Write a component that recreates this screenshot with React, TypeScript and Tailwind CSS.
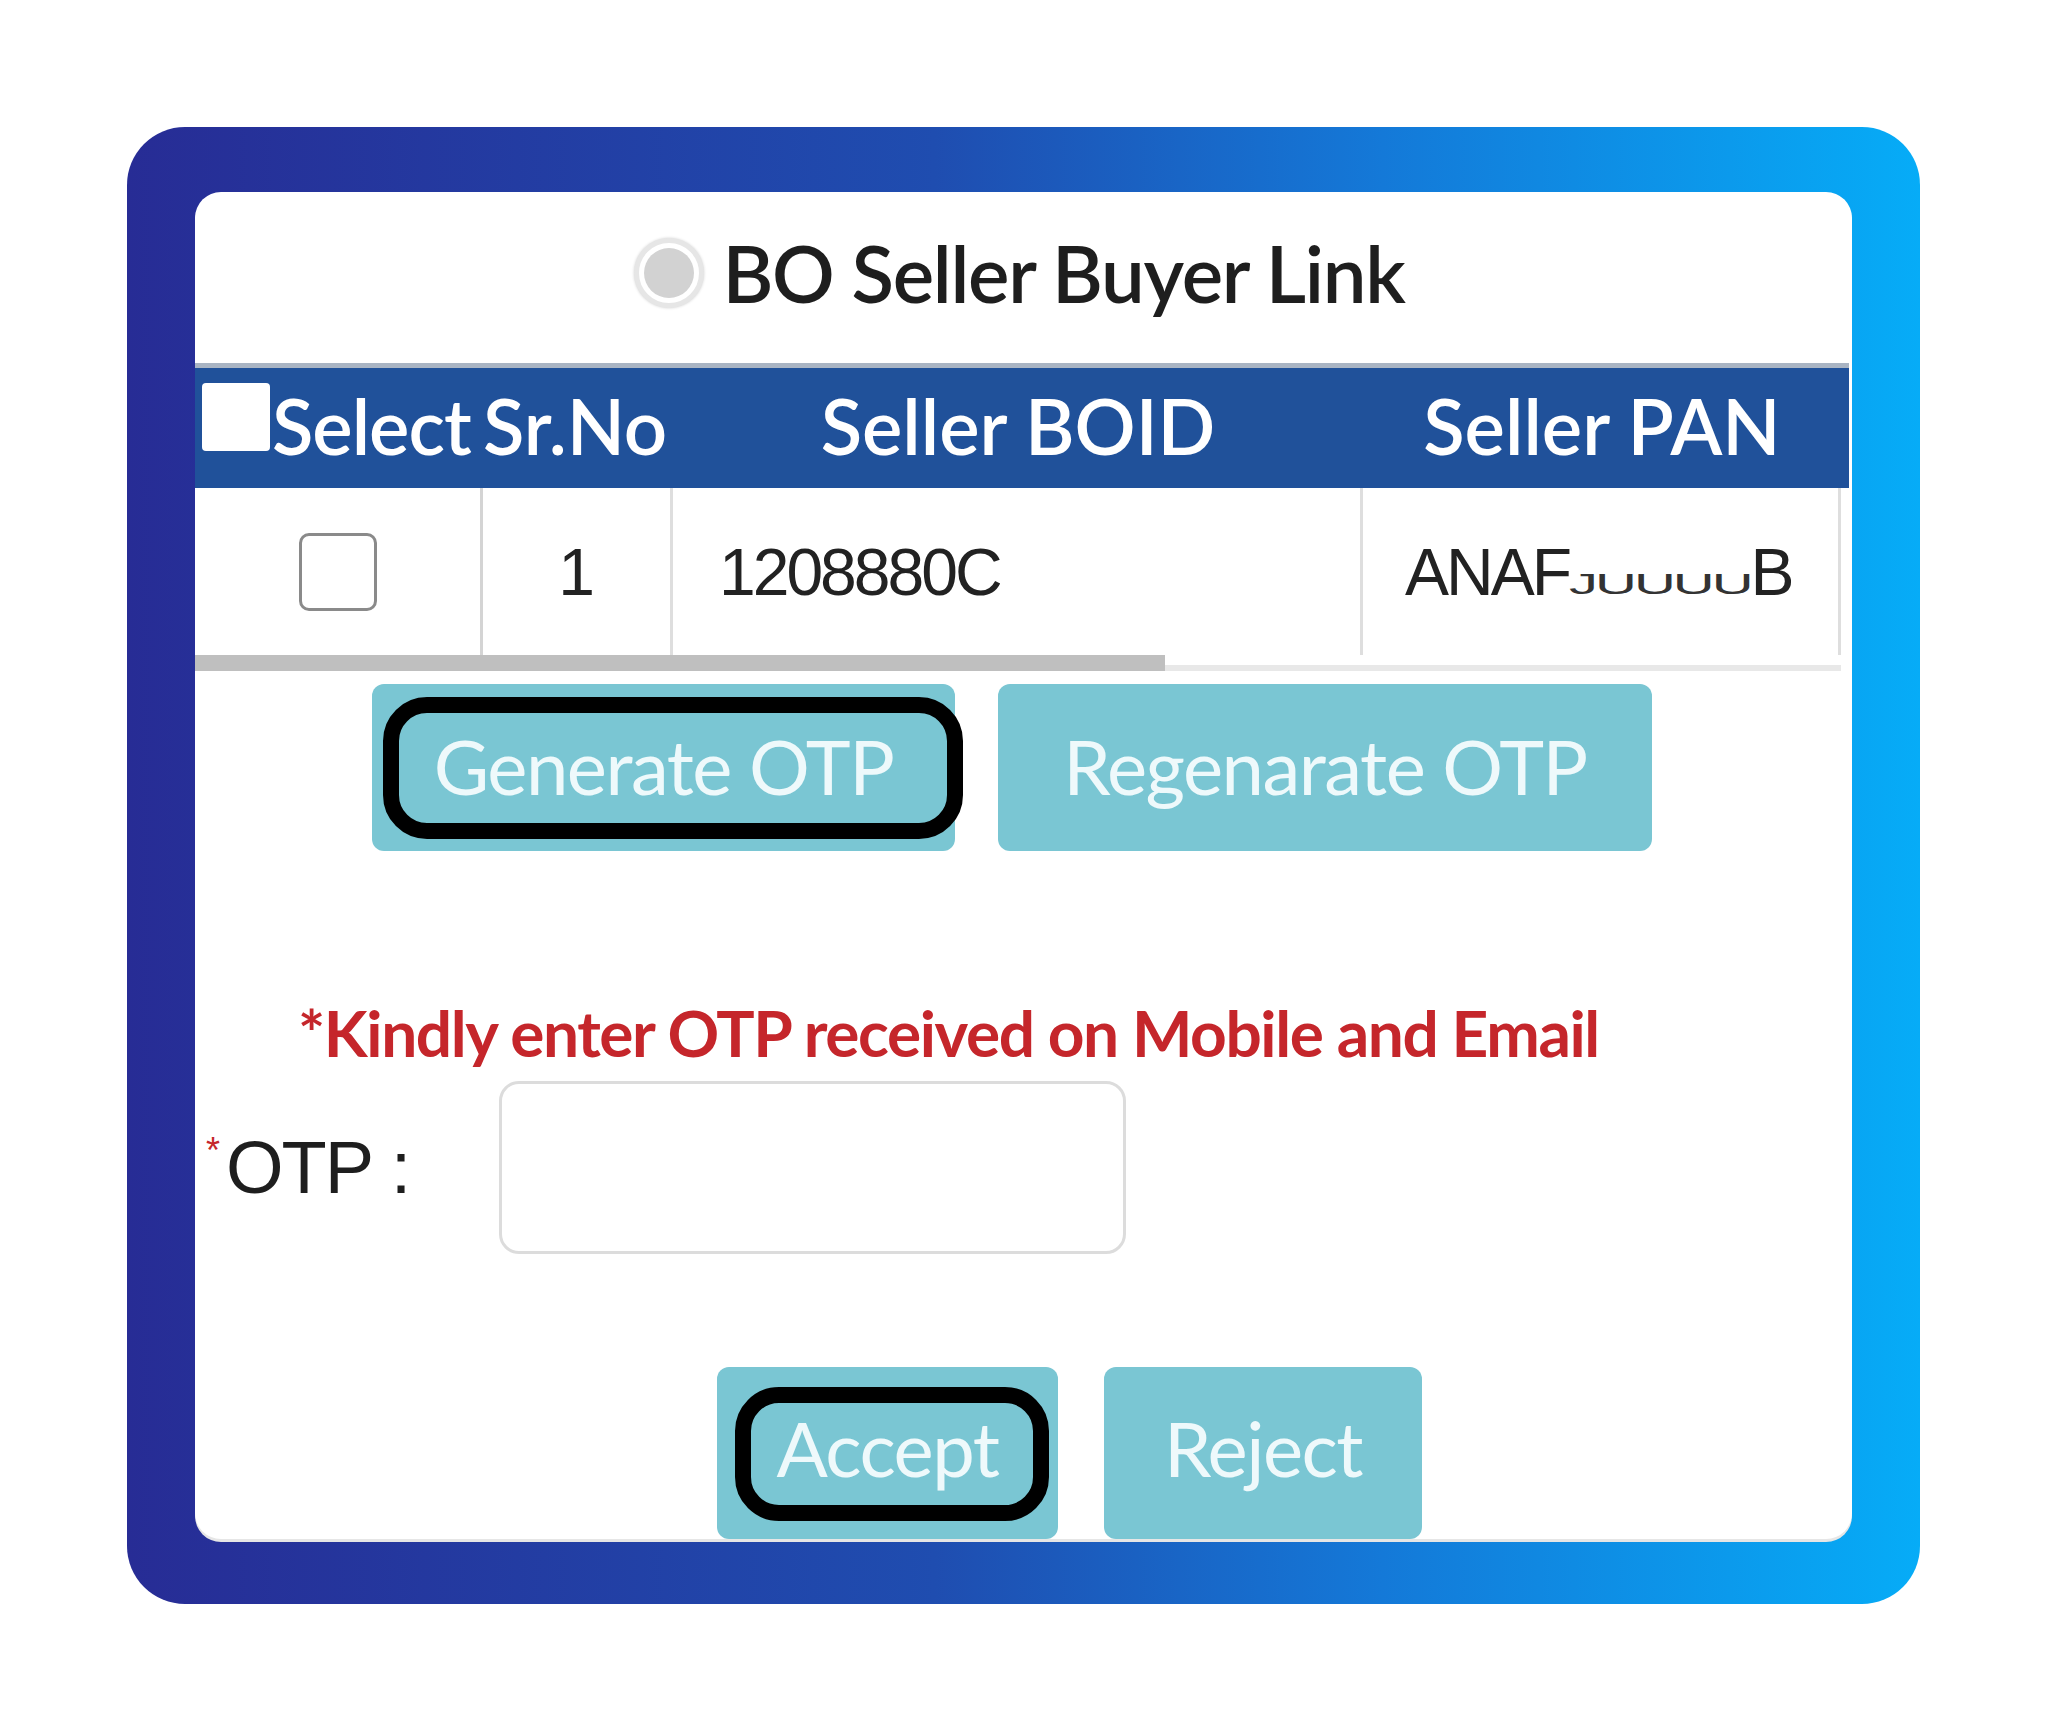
import React from "react";

export default function App() {
  const lato = { fontFamily: "Lato, 'Noto Sans', sans-serif" };
  return (
    <div className="w-[2048px] h-[1730px] bg-white pt-[127px] pl-[127px]" style={lato}>
      <div className="w-[1793px] h-[1477px] rounded-[58px] bg-[linear-gradient(90deg,#272c95_0%,#1f4db0_45%,#1479d8_70%,#06acf7_100%)] pt-[65px] pl-[68px]">
        <div className="w-[1657px] h-[1347px] rounded-[26px] bg-white overflow-hidden flex flex-col shadow-[0_3px_0_#e6e6e6]">
          {/* Title */}
          <div className="h-[175px] flex items-center justify-center gap-[18px] pb-[8px] pr-[8px]">
            <span className="w-[70px] h-[70px] rounded-full border-[5px] border-[#e6e6e6] bg-white flex items-center justify-center shadow-[0_0_3px_#d0d0d0]">
              <span className="w-[50px] h-[50px] rounded-full bg-[#d2d2d2]" />
            </span>
            <span className="text-[78px] font-semibold text-[#1e1e1e] tracking-[-1.3px] leading-none">
              BO Seller Buyer Link
            </span>
          </div>

          {/* Table header */}
          <div className="h-[128px] mr-[3px] bg-[#20519a] border-t-[5px] border-[#a9b4c3] flex items-center text-white font-semibold text-[76px] tracking-[0px] leading-none">
            <div className="w-[288px] flex items-center pl-[7px] -mt-[4px]">
              <span className="w-[68px] h-[68px] bg-white rounded-[4px] shrink-0 -mt-[18px]" />
              <span className="ml-[2px] tracking-[-1px]">Select</span>
            </div>
            <div className="w-[190px] pl-[0px] -mt-[4px] tracking-[0px]">Sr.No</div>
            <div className="w-[690px] text-center -mt-[4px]">Seller BOID</div>
            <div className="w-[478px] text-center -mt-[4px]">Seller PAN</div>
          </div>

          {/* Table body */}
          <div className="h-[183px] flex flex-col">
            <div className="h-[167px] flex text-[66px] text-[#222] leading-none" style={{ fontFamily: "'Liberation Sans', Arial, sans-serif" }}>
              <div className="w-[288px] border-r-[3px] border-[#d4d4d4] flex items-center justify-center">
                <span className="w-[78px] h-[78px] rounded-[10px] border-[3px] border-[#8a8a8a] bg-white" />
              </div>
              <div className="w-[190px] border-r-[3px] border-[#dedede] flex items-center justify-center">1</div>
              <div className="w-[690px] border-r-[3px] border-[#dedede] flex items-center pl-[46px] tracking-[-3px]">
                1208880C
              </div>
              <div className="w-[478px] border-r-[3px] border-[#dedede] flex items-center pl-[42px] tracking-[-3px]">
                ANAF<span className="inline-block text-[58px] text-[#333] scale-y-[0.5] translate-y-[12px] tracking-[-3px]">JUUUU</span>B
              </div>
            </div>
            <div className="h-[16px] flex">
              <div className="w-[970px] h-[16px] bg-[#bfbfbf]" />
              <div className="w-[676px] h-[6px] mt-[10px] bg-[#e8e8e8]" />
            </div>
          </div>

          {/* OTP buttons */}
          <div className="mt-[13px] h-[167px] flex pl-[177px] gap-[43px] text-[76px] text-[#eef9fb] leading-none tracking-[-1.5px]">
            <div className="relative w-[583px] h-[167px] rounded-[12px] bg-[#7ac6d3] flex items-center justify-center">
              <span className="-mt-[4px]">Generate OTP</span>
              <span className="absolute left-[11px] top-[13px] w-[580px] h-[142px] rounded-[44px] border-[16px] border-black" />
            </div>
            <div className="w-[654px] h-[167px] rounded-[12px] bg-[#7ac6d3] flex items-center justify-center">
              <span className="-mt-[4px]">Regenarate OTP</span>
            </div>
          </div>

          {/* Red note */}
          <div className="mt-[150px] pl-[103px] text-[64px] font-bold text-[#c5262b] leading-none tracking-[-1.4px]">
            *Kindly enter OTP received on Mobile and Email
          </div>

          {/* OTP input */}
          <div className="mt-[16px] flex items-center">
            <div className="w-[304px] pl-[11px] flex items-start text-[#1e1e1e] text-[74px] leading-none tracking-[-2px]" style={{ fontFamily: "'Liberation Sans', Arial, sans-serif" }}>
              <span className="text-[#c5262b] text-[36px] mt-[2px] mr-[8px]">*</span>
              <span>OTP&nbsp;:</span>
            </div>
            <div className="w-[627px] h-[173px] rounded-[20px] border-[3px] border-[#dcdcdc] bg-white" />
          </div>

          {/* Accept / Reject */}
          <div className="mt-[113px] flex pl-[522px] gap-[46px] text-[76px] text-[#eef9fb] leading-none tracking-[-1.5px]">
            <div className="relative w-[341px] h-[172px] rounded-[12px] bg-[#7ac6d3] flex items-center justify-center">
              <span className="-mt-[10px]">Accept</span>
              <span className="absolute left-[18px] top-[20px] w-[314px] h-[134px] rounded-[44px] border-[16px] border-black" />
            </div>
            <div className="w-[318px] h-[172px] rounded-[12px] bg-[#7ac6d3] flex items-center justify-center">
              <span className="-mt-[10px]">Reject</span>
            </div>
          </div>
        </div>
      </div>
    </div>
  );
}
